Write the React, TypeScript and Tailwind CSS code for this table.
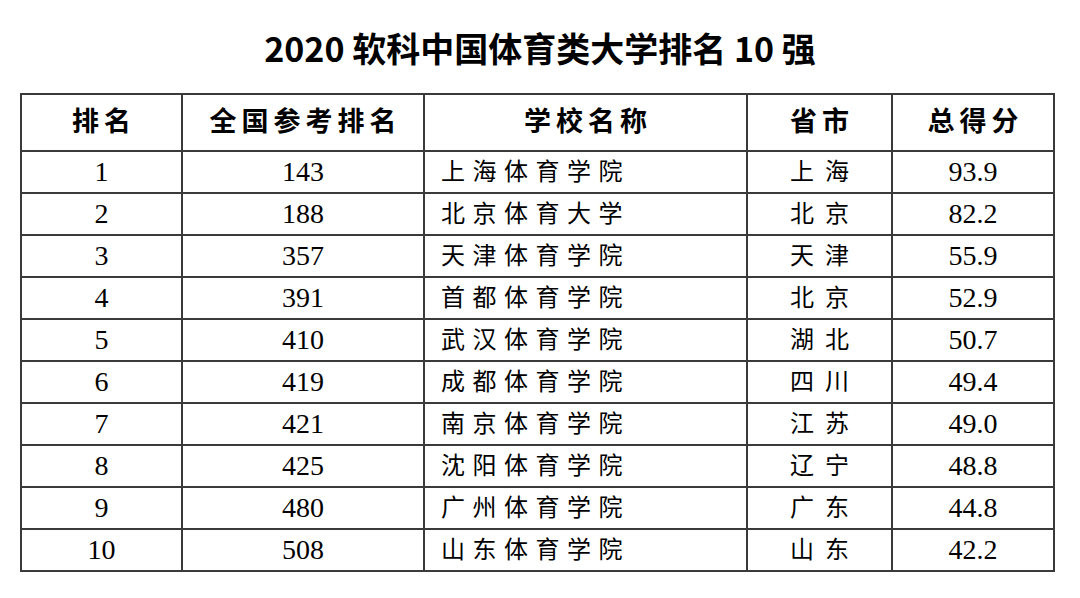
const rows = [
  { rank: '1', national: '143', name: '上海体育学院', region: '上海', score: '93.9' },
  { rank: '2', national: '188', name: '北京体育大学', region: '北京', score: '82.2' },
  { rank: '3', national: '357', name: '天津体育学院', region: '天津', score: '55.9' },
  { rank: '4', national: '391', name: '首都体育学院', region: '北京', score: '52.9' },
  { rank: '5', national: '410', name: '武汉体育学院', region: '湖北', score: '50.7' },
  { rank: '6', national: '419', name: '成都体育学院', region: '四川', score: '49.4' },
  { rank: '7', national: '421', name: '南京体育学院', region: '江苏', score: '49.0' },
  { rank: '8', national: '425', name: '沈阳体育学院', region: '辽宁', score: '48.8' },
  { rank: '9', national: '480', name: '广州体育学院', region: '广东', score: '44.8' },
  { rank: '10', national: '508', name: '山东体育学院', region: '山东', score: '42.2' },
];

const headers = ['排名', '全国参考排名', '学校名称', '省市', '总得分'];

export default function App() {
  return (
    <div className="w-[1080px] h-[598px] bg-white text-black">
      {/* Title */}
      <h1 className="pt-[26px] h-[93px] text-center text-[34px] font-bold leading-[44px] font-['Noto_Sans_CJK_SC',sans-serif]">
        2020 软科中国体育类大学排名 10 强
      </h1>

      {/* Ranking table */}
      <table className="ml-[20px] w-[1033px] table-fixed border-collapse border-2 border-[#3a3a3a] font-['Liberation_Serif','Noto_Sans_CJK_SC',serif]">
        <colgroup>
          <col className="w-[161px]" />
          <col className="w-[242px]" />
          <col className="w-[323px]" />
          <col className="w-[145px]" />
          <col className="w-[162px]" />
        </colgroup>
        <thead>
          <tr className="h-[57px]">
            {headers.map((h) => (
              <th
                key={h}
                className="border-2 border-[#3a3a3a] pl-[5px] text-center text-[27px] font-semibold tracking-[5px] leading-none"
              >
                {h}
              </th>
            ))}
          </tr>
        </thead>
        <tbody>
          {rows.map((r) => (
            <tr key={r.rank} className="h-[42px]">
              <td className="border-2 border-[#3a3a3a] text-center text-[28px] leading-none">{r.rank}</td>
              <td className="border-2 border-[#3a3a3a] text-center text-[28px] leading-none">{r.national}</td>
              <td className="border-2 border-[#3a3a3a] pl-[16px] text-left text-[24px] tracking-[7.5px] leading-none">
                {r.name}
              </td>
              <td className="border-2 border-[#3a3a3a] pl-[11px] text-center text-[24px] tracking-[11px] leading-none">
                {r.region}
              </td>
              <td className="border-2 border-[#3a3a3a] text-center text-[28px] leading-none">{r.score}</td>
            </tr>
          ))}
        </tbody>
      </table>
    </div>
  );
}
